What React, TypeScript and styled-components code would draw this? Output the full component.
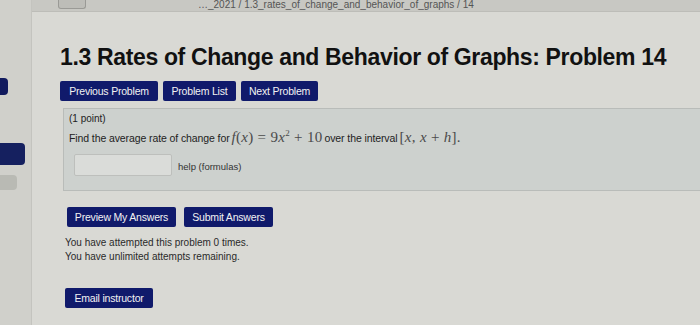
import React from "react";
import styled, { createGlobalStyle } from "styled-components";

const Global = createGlobalStyle`
  html, body { margin: 0; padding: 0; }
  body {
    width: 700px;
    height: 325px;
    overflow: hidden;
    background: #d9d9d4;
    font-family: "Liberation Sans", Arial, sans-serif;
  }
`;

const Page = styled.div`
  display: flex;
  width: 700px;
  height: 325px;
  overflow: hidden;
`;

const Sidebar = styled.div`
  width: 32px;
  flex: none;
  background: #d0d0cb;
  border-right: 1px solid #c4c4bf;
  display: flex;
  flex-direction: column;
  padding-top: 78px;
  box-sizing: border-box;
`;

const SideBlock = styled.div<{ $w: number; $h: number; $c: string; $mt: number }>`
  width: ${(p) => p.$w}px;
  height: ${(p) => p.$h}px;
  background: ${(p) => p.$c};
  margin-top: ${(p) => p.$mt}px;
  border-radius: 0 4px 4px 0;
`;

const Main = styled.div`
  flex: 1;
  display: flex;
  flex-direction: column;
  min-width: 0;
`;

const TopBar = styled.div`
  height: 11px;
  background: #c8c8c3;
  border-bottom: 1px solid #bdbdb8;
  display: flex;
  align-items: flex-start;
  overflow: hidden;
  padding-left: 26px;
`;

const TopButton = styled.div`
  width: 26px;
  height: 8px;
  border: 1px solid #9a9a96;
  border-top: none;
  border-radius: 0 0 3px 3px;
  background: #bdbdb8;
  flex: none;
`;

const Crumb = styled.div`
  margin-left: 112px;
  font-size: 10px;
  line-height: 10px;
  color: #555;
  white-space: nowrap;
`;

const Content = styled.div`
  padding-left: 28px;
  display: flex;
  flex-direction: column;
`;

const Title = styled.h1`
  margin: 31px 0 0 0;
  font-size: 23px;
  line-height: 28px;
  font-weight: bold;
  color: #111;
  letter-spacing: -0.35px;
  white-space: nowrap;
`;

const NavRow = styled.div`
  display: flex;
  gap: 5px;
  margin-top: 10px;
`;

const NavyButton = styled.div<{ $w: number }>`
  width: ${(p) => p.$w}px;
  height: 20px;
  background: #101a6b;
  border-radius: 2px;
  color: #f2f2f2;
  font-size: 10.5px;
  letter-spacing: -0.2px;
  display: flex;
  align-items: center;
  justify-content: center;
  white-space: nowrap;
`;

const ProblemBox = styled.div`
  margin-top: 7px;
  margin-left: 3px;
  margin-right: -10px;
  height: 83px;
  background: #cdd1ce;
  border: 1px solid #b9bcb9;
  padding: 4px 5px 0 5px;
  box-sizing: border-box;
  display: flex;
  flex-direction: column;
`;

const Small = styled.div`
  font-size: 10px;
  line-height: 12px;
  color: #222;
`;

const Question = styled.div`
  display: flex;
  align-items: baseline;
  font-size: 10.5px;
  line-height: 16px;
  color: #222;
  white-space: nowrap;
  letter-spacing: -0.1px;
`;

const Math = styled.span`
  font-family: "Liberation Serif", "Times New Roman", serif;
  font-size: 15px;
  color: #4a4a4a;
  margin: 0 2px;
  letter-spacing: 0.3px;
`;

const Sup = styled.sup`
  font-size: 9px;
`;

const AnswerRow = styled.div`
  display: flex;
  align-items: center;
  margin-top: 8px;
  margin-left: 5px;
`;

const Input = styled.div`
  width: 96px;
  height: 20px;
  background: #dadcd9;
  border: 1px solid #bdbfbc;
  border-radius: 2px;
`;

const Help = styled.span`
  margin-left: 6px;
  font-size: 9.5px;
  color: #333;
  padding-top: 2px;
`;

const ActionRow = styled.div`
  display: flex;
  gap: 8px;
  margin-top: 16px;
  margin-left: 7px;
`;

const Info = styled.div`
  margin-top: 9px;
  margin-left: 5px;
  font-size: 10px;
  line-height: 14px;
  color: #2a2a2a;
`;

const EmailRow = styled.div`
  margin-top: 24px;
  margin-left: 5px;
`;

export default function App() {
  return (
    <>
      <Global />
      <Page>
        <Sidebar>
          <SideBlock $w={8} $h={17} $c="#111a5e" $mt={0} />
          <SideBlock $w={25} $h={22} $c="#15205f" $mt={48} />
          <SideBlock $w={17} $h={15} $c="#b9bab4" $mt={10} />
        </Sidebar>
        <Main>
          <TopBar>
            <TopButton />
            <Crumb>…_2021 / 1.3_rates_of_change_and_behavior_of_graphs / 14</Crumb>
          </TopBar>
          <Content>
            <Title>1.3 Rates of Change and Behavior of Graphs: Problem 14</Title>
            <NavRow>
              <NavyButton $w={98}>Previous Problem</NavyButton>
              <NavyButton $w={73}>Problem List</NavyButton>
              <NavyButton $w={77}>Next Problem</NavyButton>
            </NavRow>
            <ProblemBox>
              <Small>(1 point)</Small>
              <Question>
                Find the average rate of change for
                <Math>
                  <i>f</i>(<i>x</i>) = 9<i>x</i>
                  <Sup>2</Sup> + 10
                </Math>
                over the interval
                <Math>
                  [<i>x</i>, <i>x</i> + <i>h</i>].
                </Math>
              </Question>
              <AnswerRow>
                <Input />
                <Help>help (formulas)</Help>
              </AnswerRow>
            </ProblemBox>
            <ActionRow>
              <NavyButton $w={109}>Preview My Answers</NavyButton>
              <NavyButton $w={89}>Submit Answers</NavyButton>
            </ActionRow>
            <Info>
              You have attempted this problem 0 times.
              <br />
              You have unlimited attempts remaining.
            </Info>
            <EmailRow>
              <NavyButton $w={88}>Email instructor</NavyButton>
            </EmailRow>
          </Content>
        </Main>
      </Page>
    </>
  );
}
